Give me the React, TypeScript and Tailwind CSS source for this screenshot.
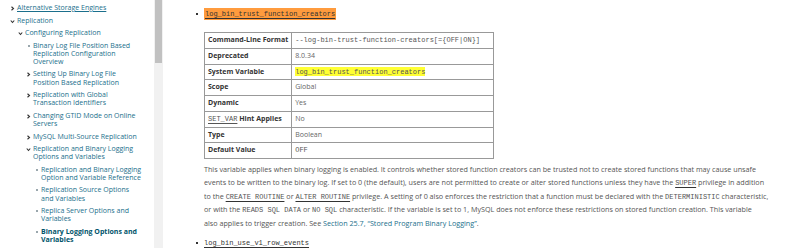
import React from 'react';

type NavItem = {
  label: string;
  level: number;
  icon: 'right' | 'down' | 'dot';
  underline?: boolean;
  active?: boolean;
};

const nav: NavItem[] = [
  { label: 'Alternative Storage Engines', level: 0, icon: 'right', underline: true },
  { label: 'Replication', level: 0, icon: 'down' },
  { label: 'Configuring Replication', level: 1, icon: 'down' },
  { label: 'Binary Log File Position Based Replication Configuration Overview', level: 2, icon: 'dot' },
  { label: 'Setting Up Binary Log File Position Based Replication', level: 2, icon: 'right' },
  { label: 'Replication with Global Transaction Identifiers', level: 2, icon: 'right' },
  { label: 'Changing GTID Mode on Online Servers', level: 2, icon: 'right' },
  { label: 'MySQL Multi-Source Replication', level: 2, icon: 'right' },
  { label: 'Replication and Binary Logging Options and Variables', level: 2, icon: 'down' },
  { label: 'Replication and Binary Logging Option and Variable Reference', level: 3, icon: 'dot' },
  { label: 'Replication Source Options and Variables', level: 3, icon: 'dot' },
  { label: 'Replica Server Options and Variables', level: 3, icon: 'dot' },
  { label: 'Binary Logging Options and Variables', level: 3, icon: 'dot', active: true },
];

const indent = ['pl-[10px]', 'pl-[18px]', 'pl-[26px]', 'pl-[34px]'];

function NavIcon({ kind }: { kind: NavItem['icon'] }) {
  if (kind === 'dot') {
    return <span className="mt-[3px] ml-[1px] block h-[2px] w-[2px] bg-[#9aa7ad]" />;
  }
  return (
    <svg width="5" height="5" viewBox="0 0 10 10" className="mt-[2px]">
      {kind === 'right' ? (
        <path d="M3 1.5 L7 5 L3 8.5" fill="none" stroke="#333" strokeWidth="2.2" />
      ) : (
        <path d="M1.5 3 L5 7 L8.5 3" fill="none" stroke="#333" strokeWidth="2.2" />
      )}
    </svg>
  );
}

function Code({ children, link }: { children: React.ReactNode; link?: boolean }) {
  return (
    <code
      className={`font-['Liberation_Mono',monospace] text-[7px] text-[#555] ${
        link ? 'underline decoration-[#333] underline-offset-[1.5px]' : ''
      }`}
    >
      {children}
    </code>
  );
}

const rows: { k: React.ReactNode; v: React.ReactNode }[] = [
  { k: 'Command-Line Format', v: <Code>--log-bin-trust-function-creators[={'{'}OFF|ON{'}'}]</Code> },
  { k: 'Deprecated', v: '8.0.34' },
  {
    k: 'System Variable',
    v: <span className="bg-[#ffff33]"><Code>log_bin_trust_function_creators</Code></span>,
  },
  { k: 'Scope', v: 'Global' },
  { k: 'Dynamic', v: 'Yes' },
  {
    k: (
      <>
        <span className="font-['Liberation_Mono',monospace] text-[7px] font-normal text-[#555] underline underline-offset-[1.5px]">SET_VAR</span> Hint Applies
      </>
    ),
    v: 'No',
  },
  { k: 'Type', v: 'Boolean' },
  { k: 'Default Value', v: <Code>OFF</Code> },
];

export default function App() {
  return (
    <div className="flex h-[248px] w-[800px] overflow-hidden bg-white font-['Open_Sans',sans-serif]">
      {/* Sidebar TOC */}
      <div className="w-[154px] shrink-0 overflow-hidden pr-[11px] pt-[4px]">
        <ul className="flex flex-col gap-[4.3px]">
          {nav.map((n) => (
            <li key={n.label} className={`flex gap-[2px] ${indent[n.level]}`}>
              <span className="flex w-[5px] shrink-0 justify-center">
                <NavIcon kind={n.icon} />
              </span>
              <span
                className={`text-[7px] leading-[8.2px] ${
                  n.active ? 'font-bold text-[#00546b]' : 'text-[#1b6f8c]'
                } ${n.underline ? 'underline' : ''}`}
              >
                {n.label}
              </span>
            </li>
          ))}
        </ul>
      </div>

      {/* scrollbar */}
      <div className="flex w-[9px] shrink-0 justify-center bg-[#f1f1f1]">
        <div className="h-[63px] w-[7px] bg-[#c1c1c1]" />
      </div>

      {/* Main content */}
      <div className="flex-1 pl-[41px] pt-[8px] text-[#555]">
        <div className="relative text-[7px] leading-[12px]">
          <span className="absolute left-[-8px] top-[5px] h-[2px] w-[2px] bg-[#333]" />
          <span className="bg-[#ff9b3d] px-[1px] py-[2px] font-['Liberation_Mono',monospace] text-[7px] text-[#333] underline underline-offset-[1.5px]">
            log_bin_trust_function_creators
          </span>
        </div>

        <table className="mt-[12px] w-[290px] border-collapse border-[1.5px] border-[#999] text-[7px]">
          <tbody>
            {rows.map((r, i) => (
              <tr key={i} className="h-[15.75px]">
                <td className="w-[86px] whitespace-nowrap border border-[#999] px-[3px] py-0 font-bold text-[#333]">{r.k}</td>
                <td className="whitespace-nowrap border border-[#999] px-[3px] py-0 text-[#666]">{r.v}</td>
              </tr>
            ))}
          </tbody>
        </table>

        <p className="mt-[4px] w-[566px] text-[7.2px] leading-[12.75px] text-[#555]">
          This variable applies when binary logging is enabled. It controls whether stored function creators can be
          trusted not to create stored functions that may cause unsafe events to be written to the binary log. If set
          to 0 (the default), users are not permitted to create or alter stored functions unless they have the{' '}
          <Code link>SUPER</Code> privilege in addition to the <Code link>CREATE ROUTINE</Code> or{' '}
          <Code link>ALTER ROUTINE</Code> privilege. A setting of 0 also enforces the restriction that a function must
          be declared with the <Code>DETERMINISTIC</Code> characteristic, or with the <Code>READS SQL DATA</Code> or{' '}
          <Code>NO SQL</Code> characteristic. If the variable is set to 1, MySQL does not enforce these restrictions on
          stored function creation. This variable
          <br />
          also applies to trigger creation. See{' '}
          <span className="text-[#1b6f8c]">Section 25.7, “Stored Program Binary Logging”</span>.
        </p>

        <div className="relative mt-[7px] text-[7px] leading-[12px]">
          <span className="absolute left-[-8px] top-[5px] h-[2px] w-[2px] bg-[#333]" />
          <span className="font-['Liberation_Mono',monospace] text-[7px] text-[#333] underline underline-offset-[1.5px]">
            log_bin_use_v1_row_events
          </span>
        </div>
      </div>
    </div>
  );
}
